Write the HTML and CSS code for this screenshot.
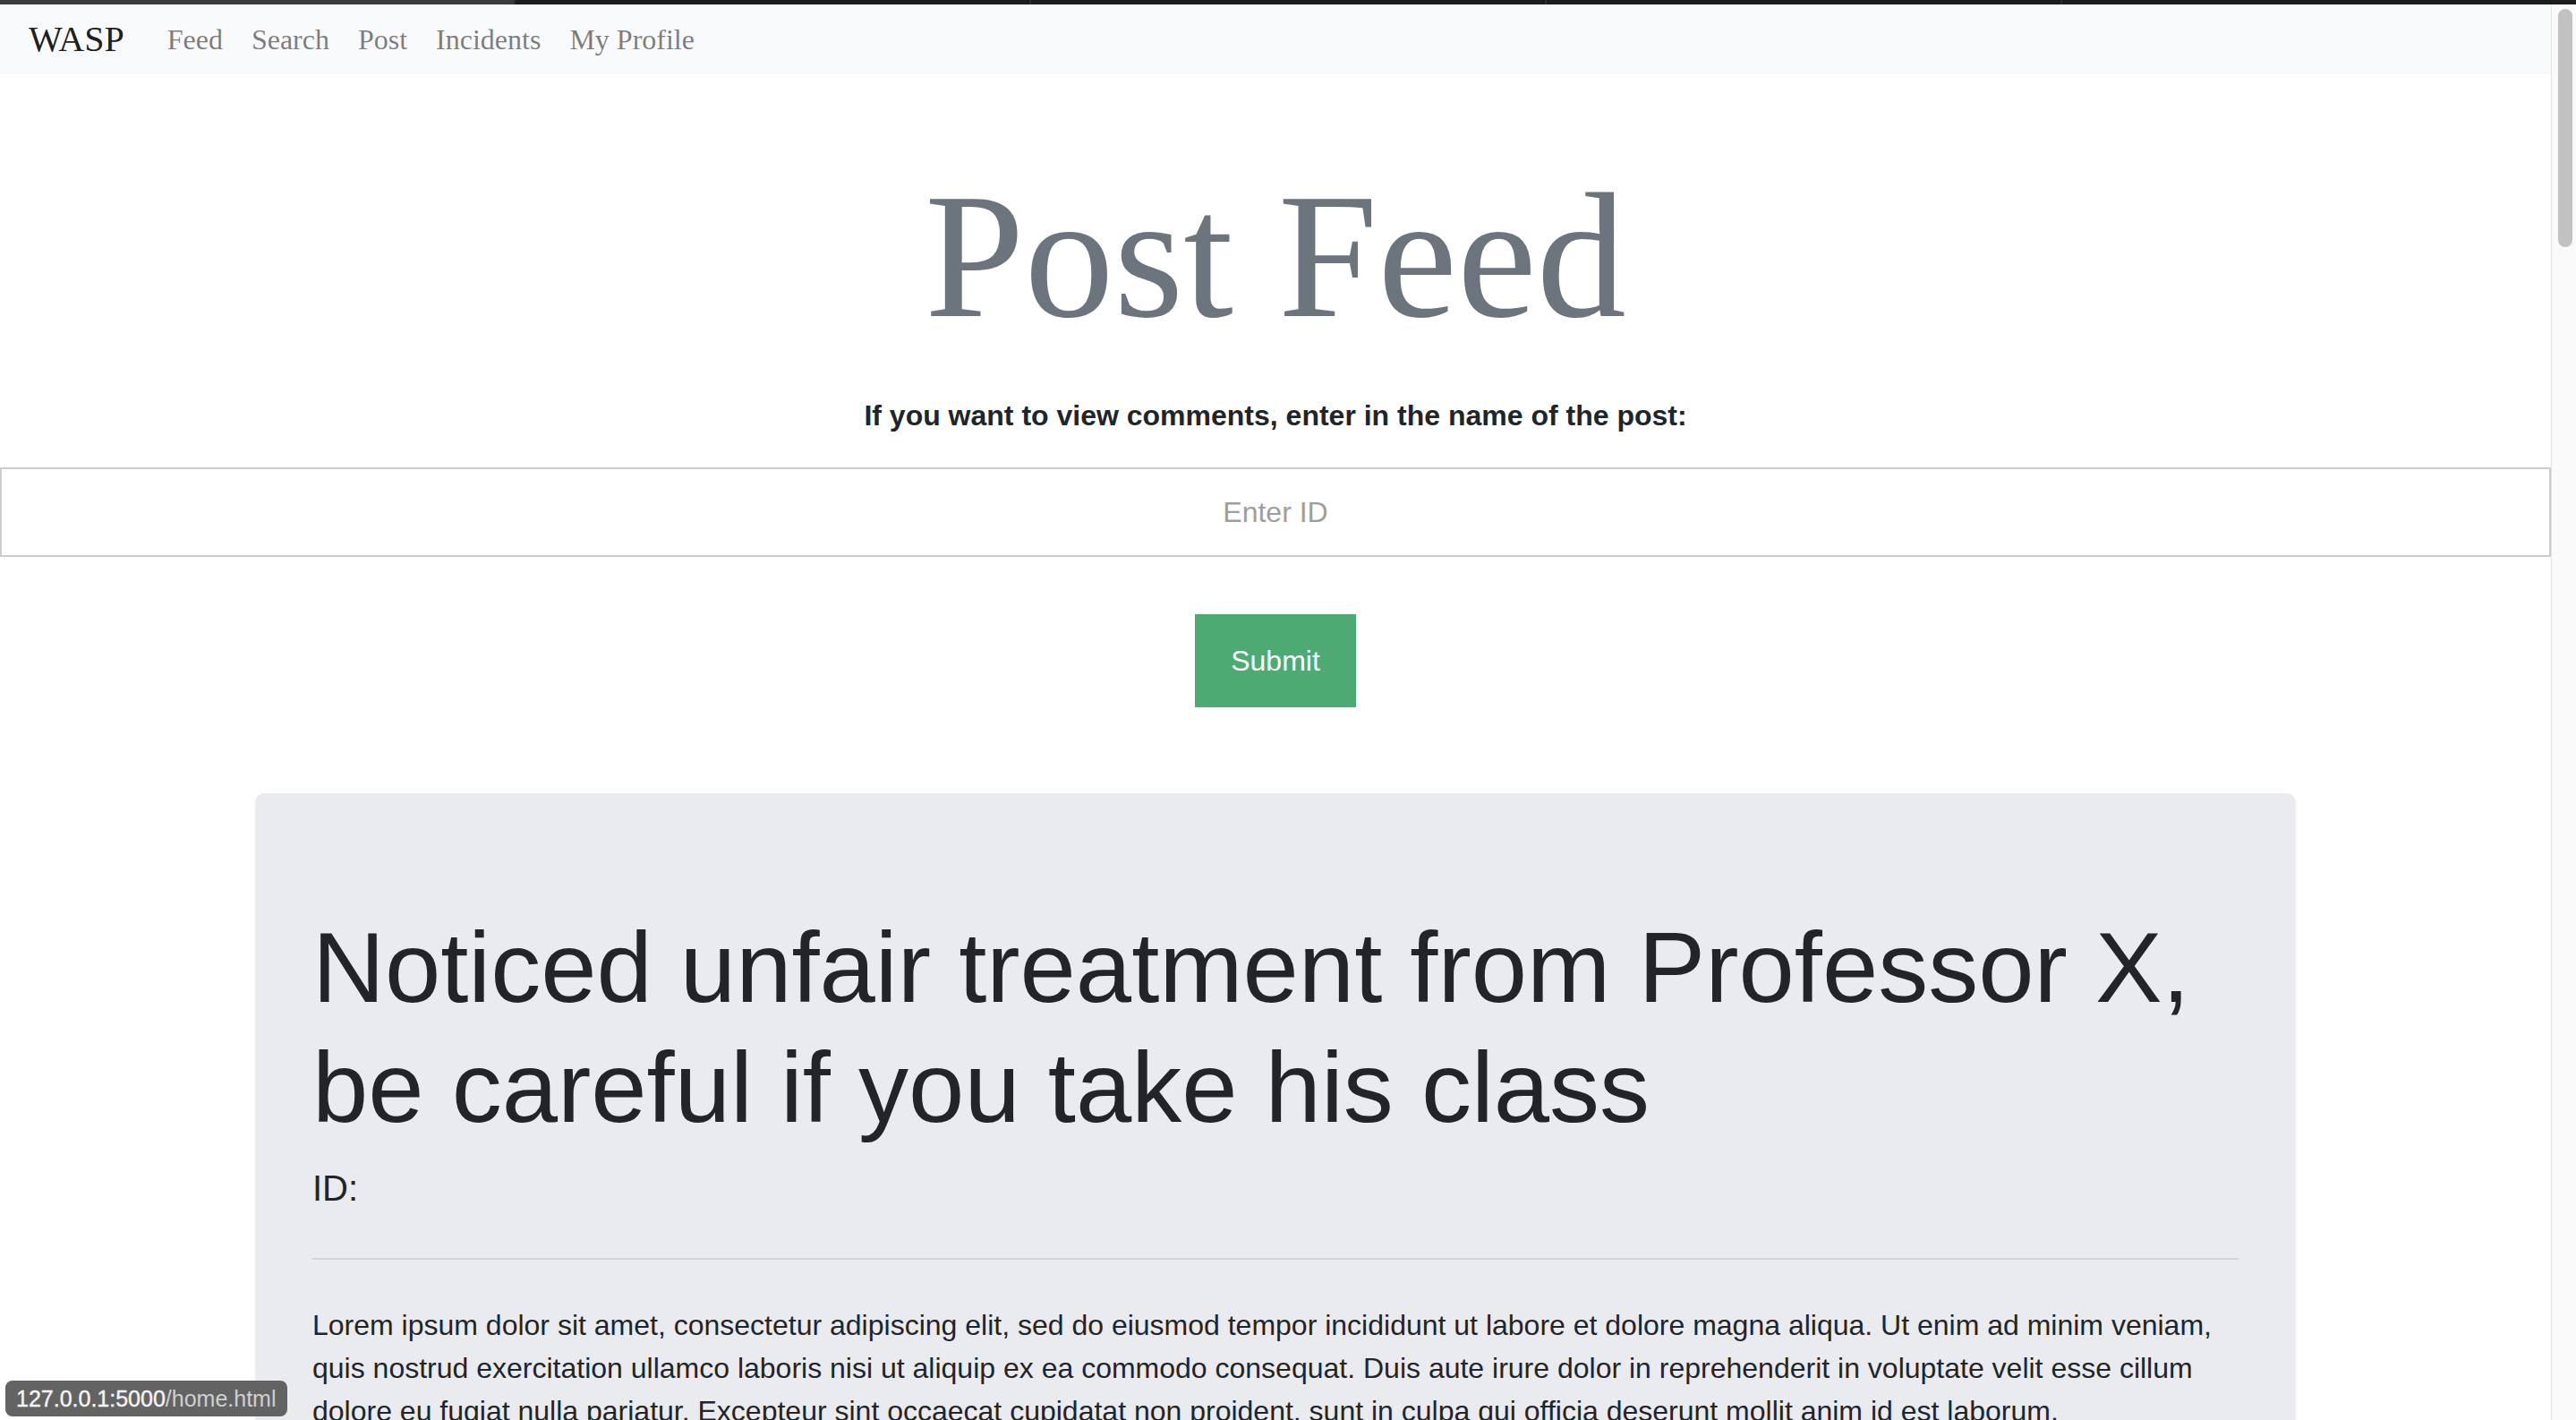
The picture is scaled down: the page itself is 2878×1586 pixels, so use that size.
FILE: index.html
```html
<!DOCTYPE html>
<html lang="en">
<head>
<meta charset="utf-8">
<title>WASP - Post Feed</title>
<link rel="stylesheet" href="styles.css">
</head>
<body>
  <div class="chrome-bar">
    <span class="tab tab-active"></span>
    <span class="tab"></span>
    <span class="tab"></span>
    <span class="tab"></span>
    <span class="tab"></span>
  </div>
  <div class="window">
    <main class="page">
      <nav class="navbar">
        <a class="brand" href="#">WASP</a>
        <a class="nav-link" href="#">Feed</a>
        <a class="nav-link" href="#">Search</a>
        <a class="nav-link" href="#">Post</a>
        <a class="nav-link" href="#">Incidents</a>
        <a class="nav-link" href="#">My Profile</a>
      </nav>

      <header class="feed-header">
        <h1 class="display-title">Post Feed</h1>
        <p class="prompt">If you want to view comments, enter in the name of the post:</p>
        <form class="lookup">
          <input class="id-input" type="text" placeholder="Enter ID">
          <button class="submit-btn" type="button">Submit</button>
        </form>
      </header>

      <section class="feed">
        <article class="post-card">
          <h2 class="post-title">Noticed unfair treatment from Professor X, be careful if you take his class</h2>
          <p class="post-id">ID:</p>
          <hr class="divider">
          <p class="post-body">Lorem ipsum dolor sit amet, consectetur adipiscing elit, sed do eiusmod tempor incididunt ut labore et dolore magna aliqua. Ut enim ad minim veniam, quis nostrud exercitation ullamco laboris nisi ut aliquip ex ea commodo consequat. Duis aute irure dolor in reprehenderit in voluptate velit esse cillum dolore eu fugiat nulla pariatur. Excepteur sint occaecat cupidatat non proident, sunt in culpa qui officia deserunt mollit anim id est laborum.</p>
        </article>
        <article class="post-card">
          <h2 class="post-title">Lab equipment in room 204 keeps breaking</h2>
          <p class="post-id">ID:</p>
          <hr class="divider">
          <p class="post-body">Lorem ipsum dolor sit amet, consectetur adipiscing elit, sed do eiusmod tempor incididunt ut labore et dolore magna aliqua.</p>
        </article>
      </section>
    </main>
    <aside class="scrollbar" aria-hidden="true">
      <div class="scroll-thumb"></div>
    </aside>
  </div>
  <div class="status-bubble"><span class="status-host">127.0.0.1:5000</span><span class="status-path">/home.html</span></div>
</body>
</html>
```

FILE: styles.css
```css
html, body {
  margin: 0;
  padding: 0;
  height: 100%;
  overflow: hidden;
}

body {
  display: flex;
  flex-direction: column;
  background: #ffffff;
  font-family: "Liberation Sans", Arial, sans-serif;
  color: #212529;
}

.chrome-bar {
  height: 5px;
  flex: 0 0 5px;
  display: flex;
  background: #1c1c1c;
}

.tab {
  flex: 0 0 574px;
  height: 100%;
  border-right: 2px solid #2c2c2c;
}

.tab-active {
  background: #3b3b3b;
}

.window {
  flex: 1;
  display: flex;
  min-height: 0;
}

.page {
  flex: 1;
  min-width: 0;
  overflow: hidden;
}

/* Navbar */
.navbar {
  height: 78px;
  display: flex;
  align-items: center;
  padding: 0 32px;
  background: #f8f9fa;
  font-family: "Liberation Serif", "Times New Roman", serif;
}

.brand {
  font-size: 40px;
  line-height: 60px;
  color: rgba(0, 0, 0, 0.9);
  text-decoration: none;
  margin-right: 32px;
}

.nav-link {
  font-size: 32px;
  line-height: 48px;
  padding: 0 16px;
  color: rgba(0, 0, 0, 0.5);
  text-decoration: none;
}

/* Header */
.feed-header {
  padding-top: 84px;
  text-align: center;
}

.display-title {
  margin: 0;
  font-family: "Liberation Serif", "Times New Roman", serif;
  font-weight: 400;
  font-size: 200px;
  line-height: 238px;
  color: #6c757d;
}

.prompt {
  margin: 35px 0 0;
  font-size: 32px;
  line-height: 48px;
  font-weight: 700;
  color: #212529;
}

.lookup {
  margin: 34px 0 0;
  display: flex;
  flex-direction: column;
  align-items: center;
}

.id-input {
  box-sizing: border-box;
  width: 100%;
  height: 100px;
  margin: 0;
  padding: 0 24px;
  border: 2px solid #cccccc;
  border-radius: 0;
  outline: none;
  background: #ffffff;
  text-align: center;
  font-family: "Liberation Sans", Arial, sans-serif;
  font-size: 32px;
  color: #495057;
}

.id-input::placeholder {
  color: #9e9e9e;
}

.submit-btn {
  margin-top: 64px;
  width: 180px;
  height: 104px;
  border: none;
  border-radius: 0;
  background: #4caa72;
  color: #ffffff;
  font-family: "Liberation Sans", Arial, sans-serif;
  font-size: 32px;
  line-height: 48px;
  padding: 0;
  cursor: pointer;
}

/* Feed */
.feed {
  padding-top: 96px;
}

.post-card {
  width: 2280px;
  box-sizing: border-box;
  margin: 0 auto 64px;
  padding: 128px 64px;
  background: #eaebef;
  border-radius: 10px;
}

.post-title {
  margin: 0 0 14px;
  font-size: 112px;
  font-weight: 400;
  line-height: 1.2;
  color: #212529;
}

.post-id {
  margin: 0 0 32px;
  font-size: 40px;
  line-height: 60px;
}

.divider {
  margin: 48px 0 49px;
  border: 0;
  border-top: 2px solid rgba(0, 0, 0, 0.09);
}

.post-body {
  margin: 0 0 32px;
  font-size: 32px;
  line-height: 48px;
}

/* Scrollbar column */
.scrollbar {
  flex: 0 0 27px;
  background: #fafafa;
  border-left: 1px solid #e4e4e4;
}

.scroll-thumb {
  margin: 5px 0 0 7px;
  width: 16px;
  height: 266px;
  border-radius: 8px;
  background: #c2c2c2;
}

/* Browser status overlay */
.status-bubble {
  position: fixed;
  left: 6px;
  bottom: 4px;
  height: 40px;
  padding: 0 12px;
  display: flex;
  align-items: center;
  border-radius: 8px;
  background: #646364;
  font-family: "Liberation Sans", Arial, sans-serif;
  font-size: 25px;
}

.status-host {
  color: #f4f4f4;
  -webkit-text-stroke: 0.4px #f4f4f4;
}

.status-path {
  color: #cfcfcf;
}
```
